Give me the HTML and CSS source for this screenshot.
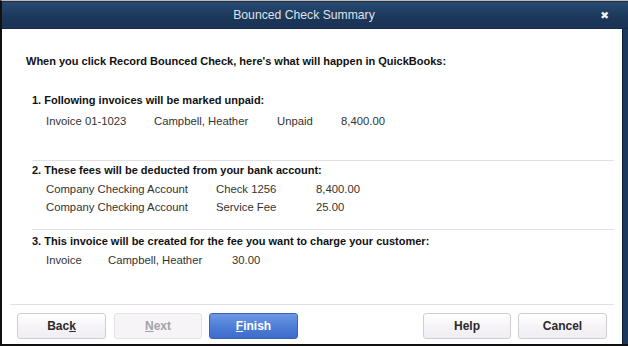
FILE: index.html
```html
<!DOCTYPE html>
<html>
<head>
<meta charset="utf-8">
<link rel="stylesheet" href="styles.css">
</head>
<body>
<div class="window">
  <div class="titlebar">
    <span class="title">Bounced Check Summary</span>
    <span class="close">&#10006;</span>
  </div>
  <div class="content">
    <div class="heading">When you click Record Bounced Check, here's what will happen in QuickBooks:</div>
    <div class="section s1">
      <div class="stitle">1. Following invoices will be marked unpaid:</div>
      <div class="rows">
        <div class="row"><span>Invoice 01-1023</span><span>Campbell, Heather</span><span>Unpaid</span><span>8,400.00</span></div>
      </div>
    </div>
    <div class="section s2">
      <div class="stitle">2. These fees will be deducted from your bank account:</div>
      <div class="rows">
        <div class="row"><span>Company Checking Account</span><span>Check 1256</span><span>8,400.00</span></div>
        <div class="row"><span>Company Checking Account</span><span>Service Fee</span><span>25.00</span></div>
      </div>
    </div>
    <div class="section s3">
      <div class="stitle">3. This invoice will be created for the fee you want to charge your customer:</div>
      <div class="rows">
        <div class="row"><span>Invoice</span><span>Campbell, Heather</span><span>30.00</span></div>
      </div>
    </div>
    <div class="footer">
      <div class="btn back">Bac<u>k</u></div>
      <div class="btn next disabled"><u>N</u>ext</div>
      <div class="btn finish primary"><u>F</u>inish</div>
      <div class="spacer"></div>
      <div class="btn help">Help</div>
      <div class="btn cancel">Cancel</div>
    </div>
  </div>
</div>
</body>
</html>
```

FILE: styles.css
```css
html, body {
  margin: 0;
  padding: 0;
  background: #ffffff;
}
body {
  width: 628px;
  height: 347px;
  overflow: hidden;
  font-family: "Liberation Sans", Arial, sans-serif;
}
.window {
  width: 628px;
  height: 346px;
  box-sizing: border-box;
  border-top: 1px solid #b8bcc2;
  border-left: 2px solid #111111;
  border-bottom: 2px solid #111111;
  background: #1d3a5d;
  display: flex;
  flex-direction: column;
}
.titlebar {
  height: 28px;
  box-sizing: border-box;
  border-top: 1px solid #2a2f36;
  border-bottom: 1px solid #142a45;
  background: linear-gradient(#284a72, #1c375a 60%, #1a3356);
  display: flex;
  align-items: center;
  justify-content: center;
  padding-right: 22px;
  position: relative;
}
.title {
  color: #dfe3ea;
  font-size: 12.2px;
}
.close {
  position: absolute;
  right: 19px;
  top: 7px;
  color: #f2f4f7;
  font-size: 10.5px;
  font-weight: bold;
  font-family: "DejaVu Sans", sans-serif;
}
.content {
  flex: 1;
  background: #ffffff;
  margin-right: 5px;
  border-right: 1px solid #0e1f35;
  display: flex;
  flex-direction: column;
}
.heading {
  margin: 25px 0 0 24px;
  font-size: 11px;
  font-weight: bold;
  color: #111111;
  line-height: 14px;
}
.section {
  margin: 0 8px 0 30px;
  border-bottom: 1px solid #e2e0e7;
}
.stitle {
  font-size: 11px;
  font-weight: bold;
  color: #111111;
  line-height: 14px;
}
.rows {
  padding-left: 14px;
  font-size: 11.3px;
  color: #333333;
}
.row {
  display: grid;
  line-height: 18px;
}
.s1 {
  margin-top: 25px;
  padding-bottom: 30px;
}
.s1 .rows { margin-top: 5px; }
.s1 .row { grid-template-columns: 108px 123px 64px auto; }
.s2 {
  padding-top: 2px;
  padding-bottom: 13px;
}
.s2 .rows { margin-top: 3px; }
.s2 .row { grid-template-columns: 170px 100px auto; }
.s3 {
  padding-top: 4px;
  border-bottom: none;
  flex: 1;
}
.s3 .rows { margin-top: 3px; }
.s3 .row { grid-template-columns: 62px 124px auto; }
.footer {
  margin: 0 8px;
  border-top: 1px solid #e2e0e7;
  padding: 8px 7px 5px 7px;
  display: flex;
  gap: 8px;
}
.spacer { flex: 1; }
.btn {
  height: 26px;
  box-sizing: border-box;
  border: 1px solid #cfcdd4;
  border-radius: 3px;
  background: linear-gradient(#ffffff, #f7f4f8 50%, #f1edf3);
  font-size: 12px;
  font-weight: bold;
  color: #2a2a2a;
  display: flex;
  align-items: center;
  justify-content: center;
}
.back { width: 89px; }
.next { width: 88px; }
.finish { width: 89px; margin-left: -1px; }
.help { width: 88px; }
.cancel { width: 89px; margin-left: -1px; }
.disabled {
  color: #a4a2a8;
  background: #f6f4f7;
  border-color: #e3e1e6;
}
.primary {
  color: #ffffff;
  border-color: #3b63b2;
  background: linear-gradient(#6c98e6, #4f7fd6 50%, #3d6ccb);
}
```
